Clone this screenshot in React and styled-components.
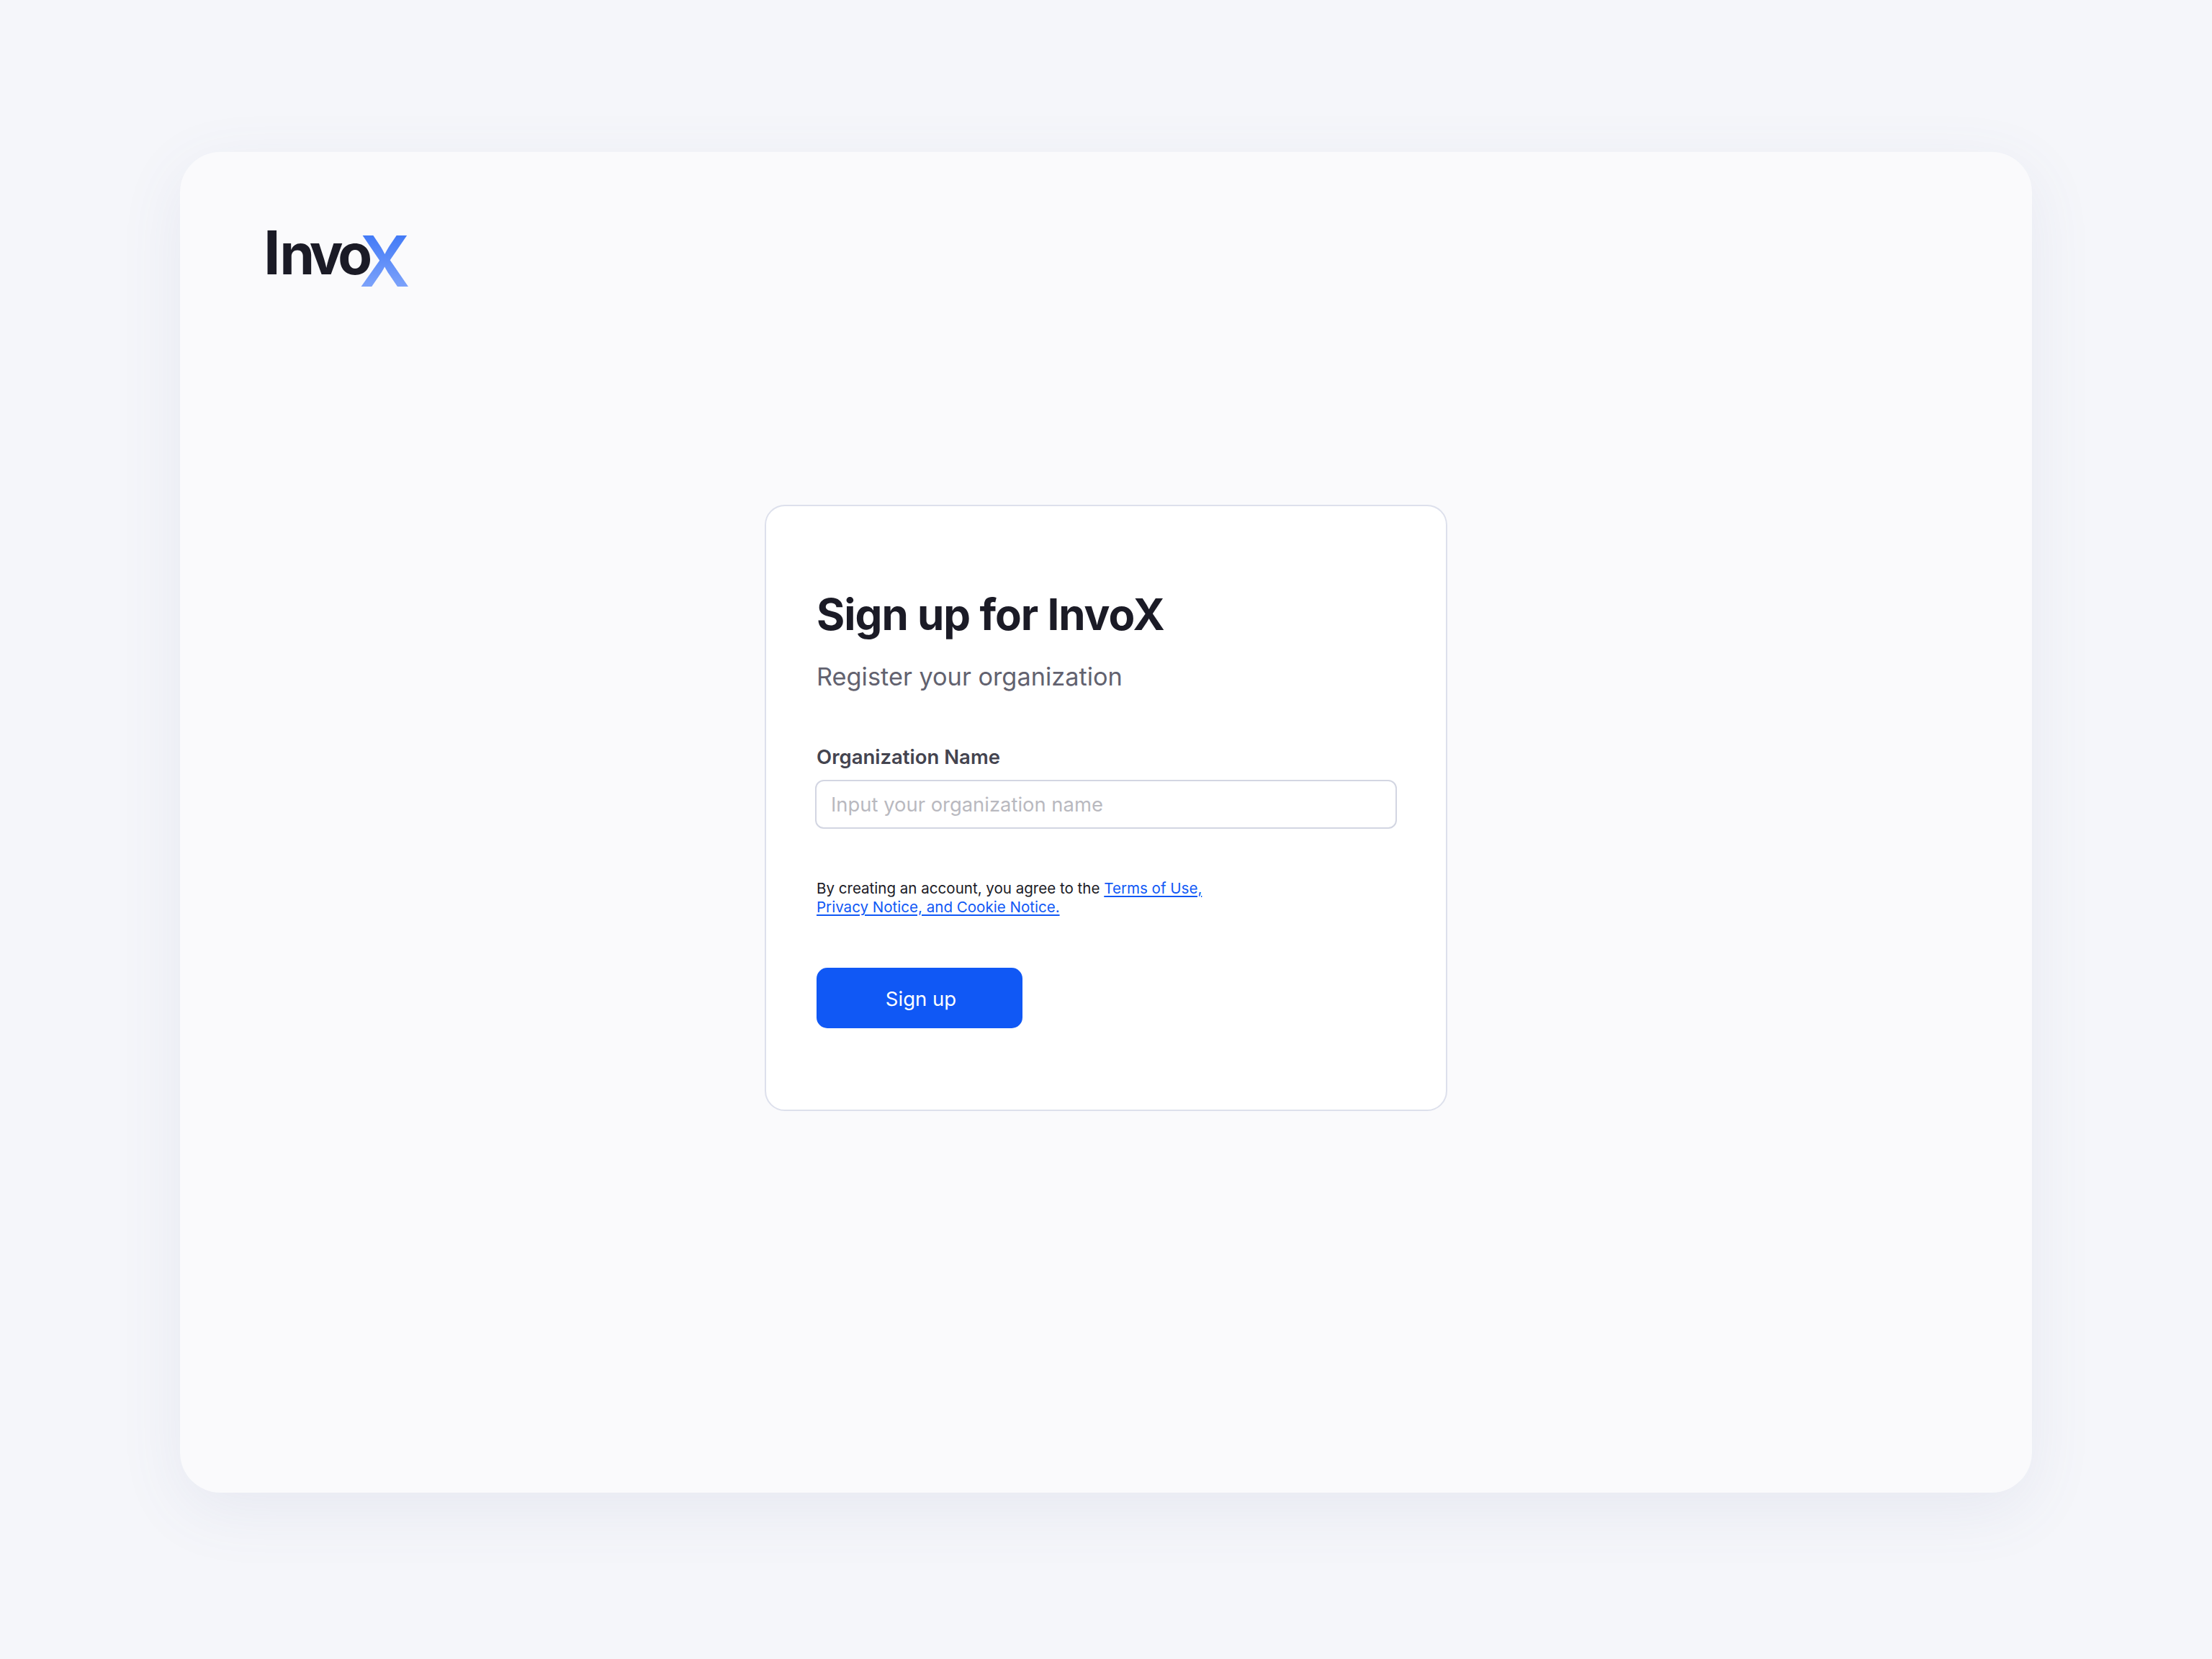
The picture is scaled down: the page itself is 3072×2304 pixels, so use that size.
import React from "react";
import styled, { createGlobalStyle } from "styled-components";

const Global = createGlobalStyle`
  html, body { margin: 0; padding: 0; background: #f5f6fa; }
  * { box-sizing: border-box; }
  body { font-family: Inter, "Noto Sans", sans-serif; }
`;

const Page = styled.div`
  width: 3072px;
  height: 2304px;
  padding: 211px 250px 231px;
  background: #f5f6fa;
`;

const Frame = styled.main`
  height: 1862px;
  padding: 92px 116px 0;
  background: #fafafc;
  border-radius: 56px;
  box-shadow: 0 24px 90px rgba(90, 100, 160, 0.09);
`;

const Logo = styled.div`
  display: flex;
  align-items: flex-start;
  height: 100px;
  font-weight: 700;
  color: #1b1b26;
`;

const LogoWord = styled.span`
  font-size: 84px;
  line-height: 96px;
  letter-spacing: -1px;
`;

const LogoTail = styled.span`
  font-size: 78px;
  letter-spacing: -6px;
`;

const LogoMark = styled.span`
  margin: 12px 0 0 -12px;
  font-size: 98px;
  line-height: 96px;
  font-weight: 600;
  background: linear-gradient(180deg, #3a74f6 0%, #86a9fb 100%);
  -webkit-background-clip: text;
  background-clip: text;
  color: transparent;
`;

const Card = styled.section`
  width: 948px;
  height: 842px;
  margin: 298px auto 0;
  padding: 112px 70px 0;
  background: #fff;
  border: 2px solid #dde0ec;
  border-radius: 28px;
`;

const Title = styled.h1`
  margin: 0;
  font-size: 60px;
  line-height: 76px;
  font-weight: 700;
  letter-spacing: -1px;
  color: #1b1b26;
`;

const Subtitle = styled.p`
  margin: 26px 0 0;
  font-size: 34.3px;
  line-height: 46px;
  color: #62626f;
`;

const Label = styled.label`
  display: block;
  margin-top: 70px;
  font-size: 27.5px;
  line-height: 36px;
  font-weight: 600;
  color: #44444f;
`;

const Input = styled.input`
  display: block;
  width: 808px;
  height: 68px;
  margin: 14px 0 0 -2px;
  padding: 0 20px;
  font: 400 27.4px Inter, sans-serif;
  color: #1b1b26;
  background: #fff;
  border: 2px solid #d3d6e2;
  border-radius: 12px;
  outline: none;
  &::placeholder { color: #b9b9bf; }
`;

const Legal = styled.p`
  margin: 70px 0 0;
  font-size: 20.55px;
  line-height: 26px;
  color: #1b1b26;
`;

const LegalLink = styled.a`
  color: #1058f5;
  text-decoration: underline;
  text-underline-offset: 3px;
  text-decoration-thickness: 2px;
`;

const Submit = styled.button`
  display: block;
  width: 286px;
  height: 84px;
  margin-top: 71px;
  padding: 2px 0 0 4px;
  font: 400 27.5px Inter, sans-serif;
  color: #fff;
  background: #1058f5;
  border: 0;
  border-radius: 15px;
`;

export default function App() {
  return (
    <Page>
      <Global />
      <Frame>
        <Logo>
          <LogoWord>I<LogoTail>nvo</LogoTail></LogoWord>
          <LogoMark>X</LogoMark>
        </Logo>
        <Card>
          <Title>Sign up for InvoX</Title>
          <Subtitle>Register your organization</Subtitle>
          <Label htmlFor="org">Organization Name</Label>
          <Input id="org" placeholder="Input your organization name" />
          <Legal>
            By creating an account, you agree to the <LegalLink href="#">Terms of Use,</LegalLink>
            <br />
            <LegalLink href="#">Privacy Notice, and Cookie Notice.</LegalLink>
          </Legal>
          <Submit>Sign up</Submit>
        </Card>
      </Frame>
    </Page>
  );
}
